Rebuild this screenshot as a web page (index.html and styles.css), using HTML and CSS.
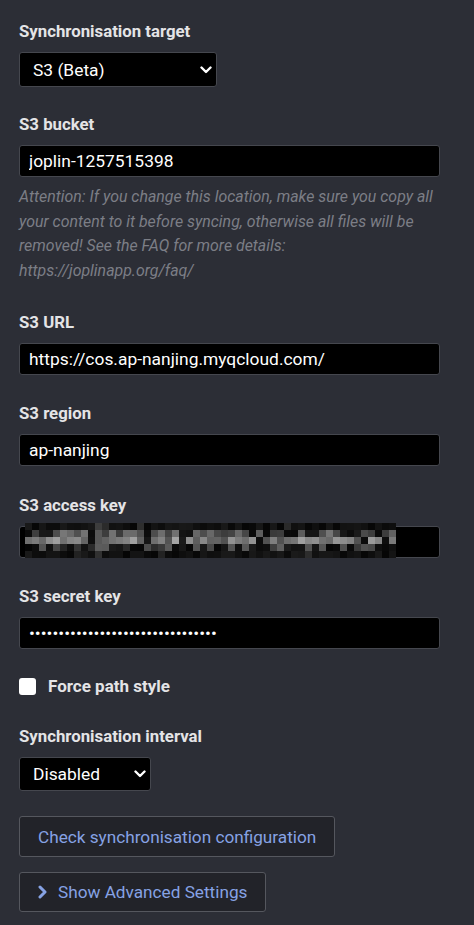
FILE: index.html
```html
<!DOCTYPE html>
<html lang="en">
<head>
<meta charset="utf-8">
<title>Synchronisation settings</title>
<link rel="stylesheet" href="styles.css">
</head>
<body>
<div class="page">
  <div class="field field-target">
    <label class="label">Synchronisation target</label>
    <div class="select-wrap select-target">
      <select class="select"><option>S3 (Beta)</option></select>
      <svg class="chev" viewBox="0 0 12 8" width="12" height="8"><path d="M1.5 1.5 L6 6 L10.5 1.5" fill="none" stroke="#fff" stroke-width="2.4" stroke-linecap="round" stroke-linejoin="round"/></svg>
    </div>
  </div>

  <div class="field">
    <label class="label">S3 bucket</label>
    <input class="input" type="text" value="joplin-1257515398">
    <p class="help">Attention: If you change this location, make sure you copy all your content to it before syncing, otherwise all files will be removed! See the FAQ for more details: https://joplinapp.org/faq/</p>
  </div>

  <div class="field">
    <label class="label">S3 URL</label>
    <input class="input" type="text" value="https://cos.ap-nanjing.myqcloud.com/">
  </div>

  <div class="field">
    <label class="label">S3 region</label>
    <input class="input" type="text" value="ap-nanjing">
  </div>

  <div class="field">
    <label class="label">S3 access key</label>
    <div class="masked">
      <input class="input" type="text" value="">
      <svg class="mosaic" width="421" height="40" viewBox="0 0 421 40"></svg>
    </div>
  </div>

  <div class="field field-secret">
    <label class="label">S3 secret key</label>
    <input class="input" type="password" value="aaaaaaaaaaaaaaaaaaaaaaaaaaaaaaaa">
  </div>

  <div class="check-row">
    <span class="checkbox"></span>
    <span class="check-label">Force path style</span>
  </div>

  <div class="field-interval">
    <label class="label">Synchronisation interval</label>
    <div class="select-wrap select-interval">
      <select class="select"><option>Disabled</option></select>
      <svg class="chev" viewBox="0 0 12 8" width="12" height="8"><path d="M1.5 1.5 L6 6 L10.5 1.5" fill="none" stroke="#fff" stroke-width="2.4" stroke-linecap="round" stroke-linejoin="round"/></svg>
    </div>
  </div>

  <div class="buttons">
    <button class="btn btn-check">Check synchronisation configuration</button>
    <button class="btn btn-adv">
      <svg class="adv-chev" viewBox="0 0 9 14" width="9" height="14"><path d="M2 2 L7 7 L2 12" fill="none" stroke="#86a2e4" stroke-width="3" stroke-linecap="round" stroke-linejoin="round"/></svg>
      <span>Show Advanced Settings</span>
    </button>
  </div>
</div>
<script src="script.js"></script>
</body>
</html>
```

FILE: styles.css
```css
html, body {
  margin: 0;
  padding: 0;
  background: #2c2e36;
}

body {
  font-family: Roboto, "Liberation Sans", sans-serif;
  color: #e2e2e4;
}

.page {
  padding: 21px 19px 12px 19px;
  display: flex;
  flex-direction: column;
}

.field {
  display: flex;
  flex-direction: column;
  margin-bottom: 28.5px;
}

.field-target {
  margin-bottom: 27px;
}

.field-secret {
  margin-bottom: 27px;
}

.label {
  display: block;
  font-size: 16.8px;
  font-weight: 700;
  line-height: 20px;
  margin-bottom: 11px;
  color: #e4e4e6;
}

.input {
  box-sizing: border-box;
  width: 421px;
  height: 32px;
  margin: 0;
  padding: 0 9px;
  background: #000;
  color: #fff;
  border: 1px solid #45474e;
  border-radius: 3px;
  font-family: Roboto, "Liberation Sans", sans-serif;
  font-size: 17.4px;
  outline: none;
}

.masked {
  position: relative;
  width: 421px;
  height: 32px;
}

.mosaic {
  position: absolute;
  left: 0;
  top: -4px;
  pointer-events: none;
}

.help {
  margin: 8px 0 0 0;
  width: 421px;
  font-size: 15.9px;
  font-style: italic;
  line-height: 24.5px;
  color: #7c7e86;
}

.select-wrap {
  position: relative;
}

.select {
  box-sizing: border-box;
  appearance: none;
  -webkit-appearance: none;
  display: block;
  width: 100%;
  margin: 0;
  background: #000;
  color: #fff;
  border: 1px solid #45474e;
  border-radius: 3px;
  font-family: Roboto, "Liberation Sans", sans-serif;
  font-size: 17.4px;
  padding: 0 0 0 13px;
  outline: none;
}

.select-target {
  width: 198px;
}

.select-target .select {
  height: 35px;
}

.select-interval {
  width: 132px;
}

.select-interval .select {
  height: 34px;
}

.chev {
  position: absolute;
  right: 5px;
  top: 50%;
  margin-top: -4px;
  pointer-events: none;
}

.check-row {
  display: flex;
  align-items: center;
  height: 20px;
  gap: 12px;
  margin-bottom: 30px;
}

.checkbox {
  box-sizing: border-box;
  width: 17px;
  height: 17px;
  background: #fff;
  border-radius: 3px;
}

.check-label {
  font-size: 17px;
  font-weight: 700;
  color: #e4e4e6;
}

.buttons {
  display: flex;
  flex-direction: column;
  align-items: flex-start;
  gap: 15px;
  margin-top: 25px;
}

.btn {
  box-sizing: border-box;
  display: flex;
  align-items: center;
  justify-content: flex-start;
  white-space: nowrap;
  background: #222329;
  border: 1px solid #55575e;
  border-radius: 3px;
  color: #86a2e4;
  font-family: Roboto, "Liberation Sans", sans-serif;
  font-size: 17.2px;
  margin: 0;
  padding: 0 18px;
  cursor: pointer;
}

.btn-check {
  width: 316px;
  height: 41px;
}

.btn-adv {
  width: 247px;
  height: 40px;
  gap: 11px;
}

.adv-chev {
  flex: none;
}
```

FILE: script.js
```js
(function () {
  var svg = document.querySelector('.mosaic');
  if (!svg) return;
  var ns = 'http://www.w3.org/2000/svg';
  var seed = 11;
  function rnd() {
    seed = (seed * 9301 + 49297) % 233280;
    return seed / 233280;
  }
  var rows = [
    { y: 1, p: 0.18, lo: 30, hi: 70 },
    { y: 8, p: 0.7, lo: 55, hi: 120 },
    { y: 15, p: 0.9, lo: 80, hi: 165 },
    { y: 22, p: 0.6, lo: 35, hi: 100 },
    { y: 29, p: 0.2, lo: 20, hi: 50 }
  ];
  for (var r = 0; r < rows.length; r++) {
    var row = rows[r];
    for (var x = 6; x < 374; x += 7) {
      var g;
      if (rnd() < row.p) {
        g = Math.round(row.lo + rnd() * (row.hi - row.lo));
      } else {
        g = Math.round(5 + rnd() * 22);
      }
      var rect = document.createElementNS(ns, 'rect');
      rect.setAttribute('x', x);
      rect.setAttribute('y', row.y);
      rect.setAttribute('width', 7);
      rect.setAttribute('height', 7);
      rect.setAttribute('fill', 'rgb(' + g + ',' + g + ',' + g + ')');
      svg.appendChild(rect);
    }
  }
})();
```
